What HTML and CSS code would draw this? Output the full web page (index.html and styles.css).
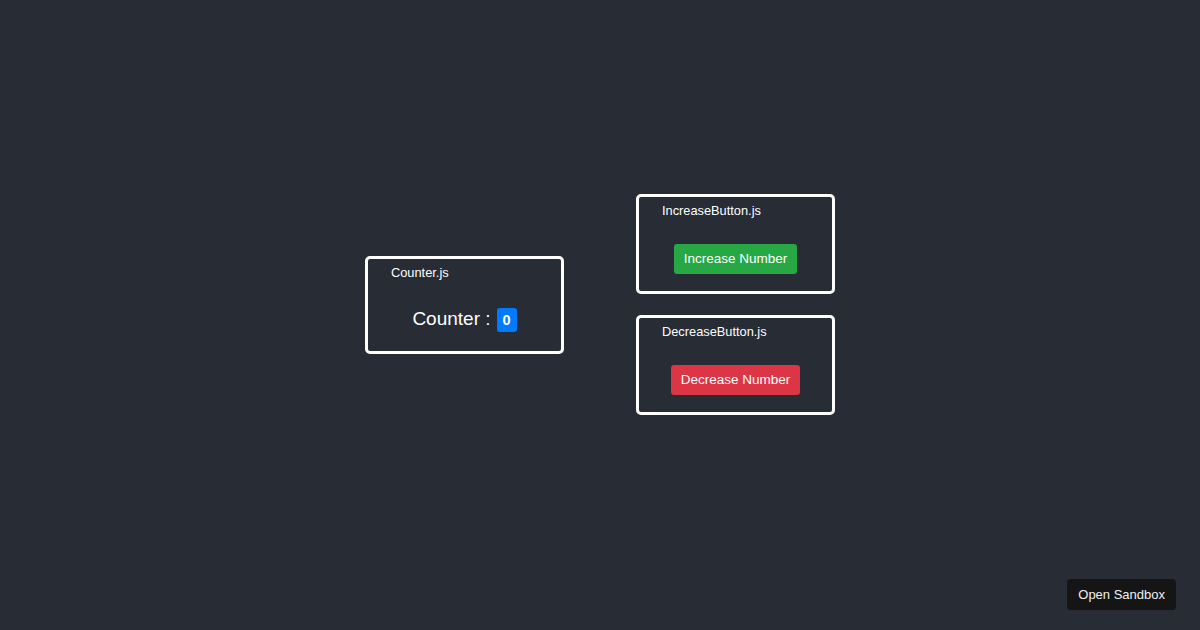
FILE: index.html
```html
<!DOCTYPE html>
<html lang="en">
<head>
  <meta charset="UTF-8">
  <meta name="viewport" content="width=device-width, initial-scale=1.0">
  <title>Counter</title>
  <link rel="stylesheet" href="styles.css">
</head>
<body>

  <div class="app">
    <!-- Counter component -->
    <div class="component counter">
      <p class="file-name">Counter.js</p>
      <div class="component-body">
        <span class="counter-label">Counter :</span>
        <span class="badge">0</span>
      </div>
    </div>

    <!-- Buttons column -->
    <div class="button-column">
      <div class="component">
        <p class="file-name">IncreaseButton.js</p>
        <div class="component-body">
          <button class="btn btn-success">Increase Number</button>
        </div>
      </div>
      <div class="component">
        <p class="file-name">DecreaseButton.js</p>
        <div class="component-body">
          <button class="btn btn-danger">Decrease Number</button>
        </div>
      </div>
    </div>
  </div>

  <a class="open-sandbox">Open Sandbox</a>

</body>
</html>
```

FILE: styles.css
```css
body {
  margin: 0;
  font-family: "Liberation Sans", Arial, sans-serif;
  background-color: #282c34;
  color: white;
}

.app {
  height: 100vh;
  box-sizing: border-box;
  padding-bottom: 21px;
  display: flex;
  align-items: center;
  justify-content: center;
  gap: 72px;
}

.button-column {
  display: flex;
  flex-direction: column;
  gap: 21px;
}

.component {
  width: 199px;
  height: 100px;
  box-sizing: border-box;
  border: 3px solid white;
  border-radius: 5px;
  padding: 6px 20px 0 23px;
}

.component.counter {
  height: 98px;
}

.file-name {
  margin: 0;
  font-size: 12.8px;
  line-height: 16px;
}

.component-body {
  margin-top: 25px;
  margin-left: -23px;
  margin-right: -20px;
  display: flex;
  align-items: center;
  justify-content: center;
  height: 30px;
}

.counter .component-body {
  margin-top: 23px;
}

.counter-label {
  font-size: 19px;
  margin-right: 6px;
}

.badge {
  background-color: #007bff;
  color: white;
  font-weight: bold;
  font-size: 14.5px;
  line-height: 16px;
  padding: 4px 6px;
  border-radius: 3px;
  margin-top: 2px;
}

.btn {
  font-family: inherit;
  font-size: 13.5px;
  line-height: 18px;
  padding: 6px 10px;
  color: white;
  border: none;
  border-radius: 3px;
  cursor: pointer;
}

.btn-success {
  background-color: #28a745;
}

.btn-danger {
  background-color: #dc3545;
}

.open-sandbox {
  position: fixed;
  right: 24px;
  bottom: 20px;
  background-color: #151515;
  color: #f0f0f0;
  font-size: 13px;
  line-height: 31px;
  padding: 0 11px;
  border-radius: 4px;
}
```
